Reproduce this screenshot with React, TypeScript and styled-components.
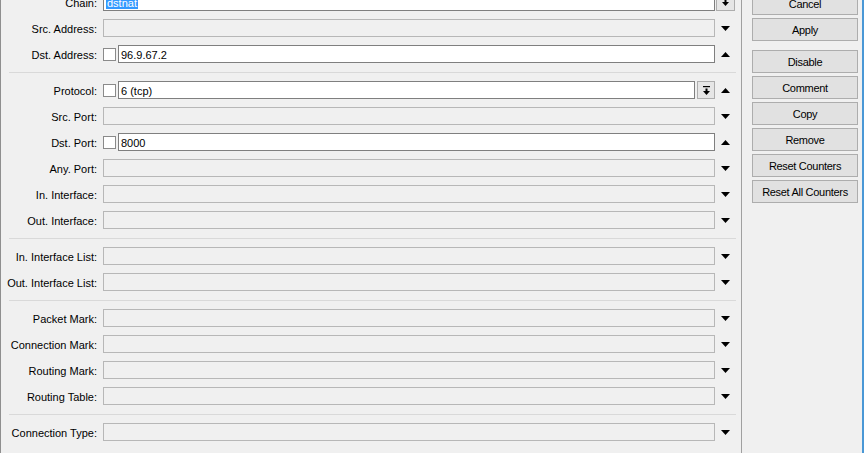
import React from 'react';
import styled, { createGlobalStyle } from 'styled-components';

const GlobalStyle = createGlobalStyle`
  html, body {
    margin: 0;
    padding: 0;
    background: #f0f0f0;
    overflow: hidden;
  }
  body {
    font-family: "Liberation Sans", Arial, sans-serif;
    font-size: 11px;
    color: #000;
  }
`;

const Window = styled.div`
  display: flex;
  width: 864px;
  height: 453px;
  box-sizing: border-box;
  overflow: hidden;
  background: #f0f0f0;
  border-left: 1px solid #8f8f8f;
  border-right: 2px solid #4a98d6;
`;

const Form = styled.div`
  flex: none;
  width: 740px;
  margin-top: -11px;
  display: flex;
  flex-direction: column;
`;

const Row = styled.div`
  display: flex;
  align-items: center;
  height: 26px;
  padding-right: 7px;
`;

const Label = styled.label`
  flex: none;
  width: 96px;
  margin-right: 6px;
  padding-top: 1px;
  text-align: right;
  white-space: nowrap;
`;

const Field = styled.div`
  flex: none;
  width: 612px;
  display: flex;
  align-items: center;
  gap: 2px;
`;

const Input = styled.div<{ $enabled?: boolean }>`
  flex: 1;
  height: 18px;
  box-sizing: border-box;
  padding: 1px 2px 0;
  display: flex;
  align-items: center;
  white-space: nowrap;
  overflow: hidden;
  border: 1px solid ${(p) => (p.$enabled ? '#7f7f7f' : '#b7b7b7')};
  background: ${(p) => (p.$enabled ? '#fff' : '#f0f0f0')};
`;

const Selected = styled.span`
  background: #3399ff;
  color: #fff;
  padding: 0 1px;
`;

const Checkbox = styled.span`
  flex: none;
  width: 13px;
  height: 13px;
  box-sizing: border-box;
  border: 1px solid #8a8a8a;
  background: #fff;
`;

const DropButton = styled.span<{ $width: number }>`
  flex: none;
  width: ${(p) => p.$width}px;
  height: 18px;
  box-sizing: border-box;
  border: 1px solid #adadad;
  background: #e6e6e6;
  display: flex;
  align-items: center;
  justify-content: center;
`;

const ArrowCell = styled.div`
  flex: none;
  width: 19px;
  margin-left: 1px;
  display: flex;
  align-items: center;
  justify-content: center;
`;

const Separator = styled.div`
  height: 10px;
  display: flex;
  align-items: center;
  padding: 0 5px 0 8px;

  &::before {
    content: '';
    flex: 1;
    border-top: 1px solid #d9d9d9;
  }
`;

const Sidebar = styled.div`
  flex: none;
  width: 121px;
  box-sizing: border-box;
  border-left: 1px solid #a0a0a0;
  padding: 0 4px 0 10px;
`;

const ButtonList = styled.div`
  margin-top: -8px;
  display: flex;
  flex-direction: column;
  gap: 3px;
`;

const Button = styled.button<{ $spaced?: boolean }>`
  width: 106px;
  height: 23px;
  box-sizing: border-box;
  padding: 1px 0 0;
  margin-top: ${(p) => (p.$spaced ? '6px' : '0')};
  border: 1px solid #adadad;
  background: #e1e1e1;
  font: inherit;
  letter-spacing: -0.3px;
  color: #000;
  text-align: center;
`;

const Triangle: React.FC<{ up?: boolean }> = ({ up }) => (
  <svg width="9" height="5" viewBox="0 0 9 5">
    <polygon points={up ? '0,5 4.5,0 9,5' : '0,0 9,0 4.5,5'} fill="#000" />
  </svg>
);

const ArrowDownIcon: React.FC = () => (
  <svg width="7" height="8" viewBox="0 0 7 8">
    <rect x="2.5" y="0" width="2" height="4" fill="#000" />
    <polygon points="0,4 7,4 3.5,8" fill="#000" />
  </svg>
);

const BarArrowIcon: React.FC = () => (
  <svg width="7" height="9" viewBox="0 0 7 9">
    <rect x="0" y="0" width="7" height="1.2" fill="#000" />
    <rect x="2.5" y="2.5" width="2" height="3" fill="#000" />
    <polygon points="0,5 7,5 3.5,9" fill="#000" />
  </svg>
);

type Arrow = 'up' | 'down' | 'none';

interface FieldDef {
  label: string;
  value?: string;
  check?: boolean;
  arrow: Arrow;
  picker?: boolean;
}

const groups: FieldDef[][] = [
  [
    { label: 'Src. Address:', arrow: 'down' },
    { label: 'Dst. Address:', value: '96.9.67.2', check: true, arrow: 'up' },
  ],
  [
    { label: 'Protocol:', value: '6 (tcp)', check: true, arrow: 'up', picker: true },
    { label: 'Src. Port:', arrow: 'down' },
    { label: 'Dst. Port:', value: '8000', check: true, arrow: 'up' },
    { label: 'Any. Port:', arrow: 'down' },
    { label: 'In. Interface:', arrow: 'down' },
    { label: 'Out. Interface:', arrow: 'down' },
  ],
  [
    { label: 'In. Interface List:', arrow: 'down' },
    { label: 'Out. Interface List:', arrow: 'down' },
  ],
  [
    { label: 'Packet Mark:', arrow: 'down' },
    { label: 'Connection Mark:', arrow: 'down' },
    { label: 'Routing Mark:', arrow: 'down' },
    { label: 'Routing Table:', arrow: 'down' },
  ],
  [{ label: 'Connection Type:', arrow: 'down' }],
];

const FieldRow: React.FC<{ def: FieldDef }> = ({ def }) => (
  <Row>
    <Label>{def.label}</Label>
    <Field>
      {def.check && <Checkbox />}
      <Input $enabled={def.value !== undefined}>{def.value}</Input>
      {def.picker && (
        <DropButton $width={18}>
          <BarArrowIcon />
        </DropButton>
      )}
    </Field>
    <ArrowCell>{def.arrow !== 'none' && <Triangle up={def.arrow === 'up'} />}</ArrowCell>
  </Row>
);

const buttons = ['Cancel', 'Apply', 'Disable', 'Comment', 'Copy', 'Remove', 'Reset Counters', 'Reset All Counters'];

export default function App() {
  return (
    <>
      <GlobalStyle />
      <Window>
        <Form>
          <Row>
            <Label>Chain:</Label>
            <Field>
              <Input $enabled>
                <Selected>dstnat</Selected>
              </Input>
            </Field>
            <ArrowCell>
              <DropButton $width={19}>
                <ArrowDownIcon />
              </DropButton>
            </ArrowCell>
          </Row>
          {groups.map((group, i) => (
            <React.Fragment key={i}>
              {i > 0 && <Separator />}
              {group.map((def) => (
                <FieldRow key={def.label} def={def} />
              ))}
            </React.Fragment>
          ))}
        </Form>
        <Sidebar>
          <ButtonList>
            {buttons.map((name) => (
              <Button key={name} $spaced={name === 'Disable'}>
                {name}
              </Button>
            ))}
          </ButtonList>
        </Sidebar>
      </Window>
    </>
  );
}
